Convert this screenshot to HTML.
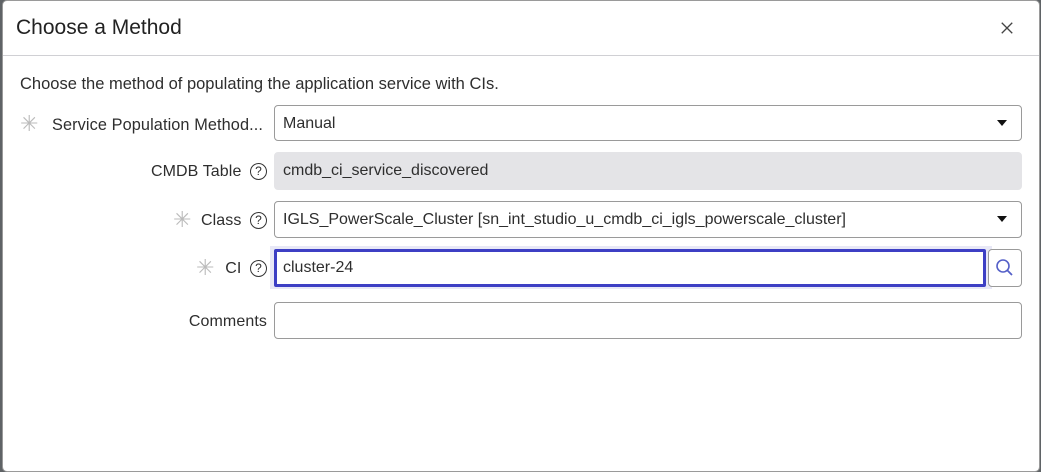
<!DOCTYPE html>
<html><head><style>
body{margin:0;width:1041px;height:464px;background:#5f6366;position:relative;overflow:hidden;font-family:"Liberation Sans",sans-serif;color:#2e2e2e}
.dlg{position:absolute;left:2px;top:0;width:1036px;height:470px;background:#fff;border-radius:5px;border:1px solid #9a9a9a}
.hdr{height:54px;border-bottom:1px solid #d0d0d4;position:relative}
.hdr h1{margin:0;position:absolute;left:13px;top:15px;font-size:21px;font-weight:normal;color:#222}
.x{position:absolute;left:997px;top:20px;width:14px;height:14px}
.lbl{position:absolute;font-size:16px;text-align:right;right:772px;letter-spacing:0.1px}
.inp{position:absolute;left:271px;width:748px;height:36px;border:1px solid #9a9a9a;border-radius:4px;box-sizing:border-box;font-size:16px;padding:9px 8px;background:#fff}
.q{display:inline-block;width:15px;height:15px;border:1.4px solid #333;border-radius:50%;font-size:12px;line-height:15px;text-align:center;vertical-align:1px;margin-left:4px}
.star{position:absolute;color:#bbb;font-size:22px}
.tri{position:absolute;right:14px;top:14px;width:0;height:0;border-left:5px solid transparent;border-right:5px solid transparent;border-top:6px solid #111}
</style></head><body>
<div class="dlg">
<div class="hdr"><h1>Choose a Method</h1>
<svg class="x" viewBox="0 0 16 16"><path d="M2 2L14 14M14 2L2 14" stroke="#444" stroke-width="1.5"/></svg></div>
<div style="position:absolute;left:17px;top:74px;font-size:16.5px">Choose the method of populating the application service with CIs.</div>

<span class="star" style="left:17px;top:110px">✳</span>
<div class="lbl" style="top:115px;right:776px;font-size:16.3px">Service Population Method...</div>
<div class="inp" style="top:104px">Manual<div class="tri"></div></div>

<div class="lbl" style="top:162px">CMDB Table <span class="q">?</span></div>
<div class="inp" style="top:151px;height:38px;background:#e4e4e7;border-color:#e4e4e7">cmdb_ci_service_discovered</div>

<span class="star" style="left:170px;top:206px">✳</span>
<div class="lbl" style="top:211px">Class <span class="q">?</span></div>
<div class="inp" style="top:200px;height:37px">IGLS_PowerScale_Cluster [sn_int_studio_u_cmdb_ci_igls_powerscale_cluster]<div class="tri"></div></div>

<span class="star" style="left:193px;top:254px">✳</span>
<div class="lbl" style="top:259px">CI <span class="q">?</span></div>
<div style="position:absolute;left:267px;top:245px;width:722px;height:43px;background:#e8e8f6"></div>
<div class="inp" style="top:248px;width:712px;height:38px;border:3px solid #3d3fc4;border-radius:2px;padding:7px 6px">cluster-24</div>
<div class="inp" style="top:248px;left:985px;width:34px;height:38px;padding:0">
<svg width="32" height="36" viewBox="0 0 32 36"><circle cx="14" cy="16" r="6" fill="none" stroke="#5560c8" stroke-width="1.6"/><path d="M18.5 20.5L23 25" stroke="#5560c8" stroke-width="1.8"/></svg></div>

<div class="lbl" style="top:312px">Comments</div>
<div class="inp" style="top:301px;height:37px"></div>
</div>
</body></html>
